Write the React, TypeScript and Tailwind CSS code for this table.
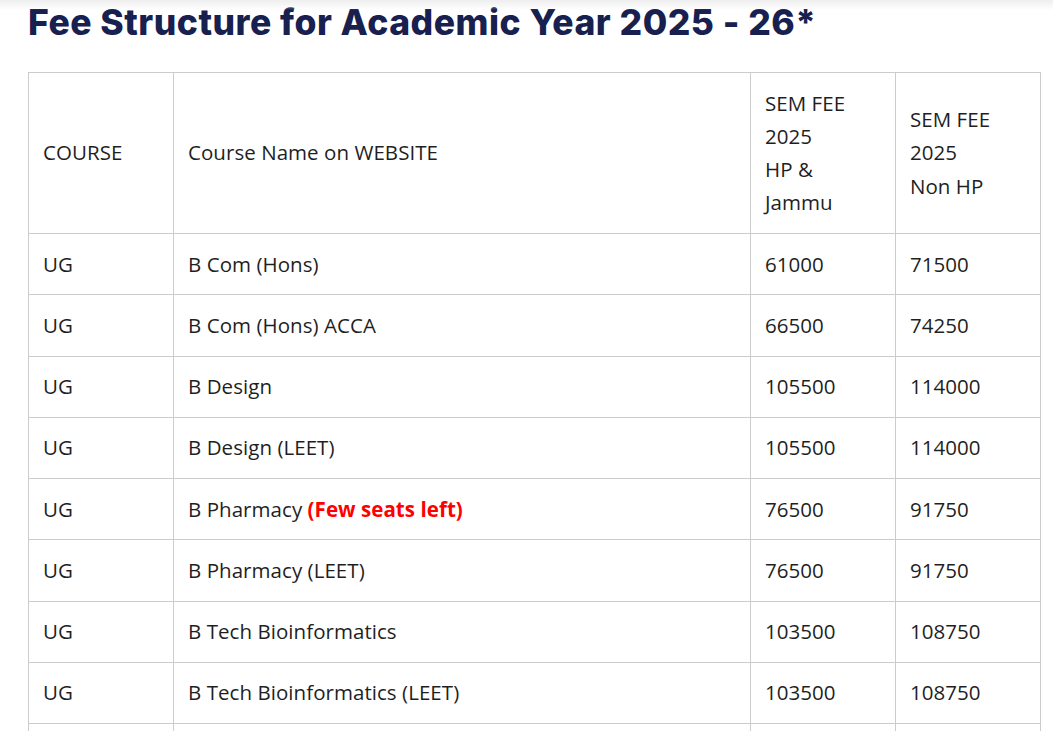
const rows: { level: string; name: string; note?: string; hp: string; nonHp: string }[] = [
  { level: "UG", name: "B Com (Hons)", hp: "61000", nonHp: "71500" },
  { level: "UG", name: "B Com (Hons) ACCA", hp: "66500", nonHp: "74250" },
  { level: "UG", name: "B Design", hp: "105500", nonHp: "114000" },
  { level: "UG", name: "B Design (LEET)", hp: "105500", nonHp: "114000" },
  { level: "UG", name: "B Pharmacy", note: "(Few seats left)", hp: "76500", nonHp: "91750" },
  { level: "UG", name: "B Pharmacy (LEET)", hp: "76500", nonHp: "91750" },
  { level: "UG", name: "B Tech Bioinformatics", hp: "103500", nonHp: "108750" },
  { level: "UG", name: "B Tech Bioinformatics (LEET)", hp: "103500", nonHp: "108750" },
  { level: "UG", name: "B Tech Biotechnology", hp: "103500", nonHp: "108750" },
];

const cell = "border border-[#cccccc] px-[14px] py-[13.5px] align-middle text-left font-normal";

export default function App() {
  return (
    <div className="min-h-screen bg-white font-['Open_Sans','Noto_Sans',sans-serif] text-[#1f1f1f]">
      <div className="pointer-events-none fixed inset-x-0 top-0 h-[10px] bg-gradient-to-b from-[#eeeeee] to-white/0" />
      <div className="px-[28px]">
        <h1 className="pt-px font-['Inter',sans-serif] text-[35.5px] font-extrabold leading-[44px] tracking-[0.5px] text-[#17204f]">
          Fee Structure for Academic Year 2025 - 26*
        </h1>
        <table className="mt-[27px] w-[1012px] table-fixed border-collapse text-[20.5px] leading-[33.25px] tracking-[0.05px]">
          <colgroup>
            <col className="w-[145px]" />
            <col className="w-[577px]" />
            <col className="w-[145px]" />
            <col className="w-[145px]" />
          </colgroup>
          <thead>
            <tr>
              <th className={cell}>COURSE</th>
              <th className={cell}>Course Name on WEBSITE</th>
              <th className={cell}>
                SEM FEE
                <br />
                2025
                <br />
                HP &amp;
                <br />
                Jammu
              </th>
              <th className={cell}>
                SEM FEE
                <br />
                2025
                <br />
                Non HP
              </th>
            </tr>
          </thead>
          <tbody>
            {rows.map((r, i) => (
              <tr key={i}>
                <td className={cell}>{r.level}</td>
                <td className={cell}>
                  {r.name}
                  {r.note && <span className="font-bold text-[#ff0000]"> {r.note}</span>}
                </td>
                <td className={cell}>{r.hp}</td>
                <td className={cell}>{r.nonHp}</td>
              </tr>
            ))}
          </tbody>
        </table>
      </div>
    </div>
  );
}
